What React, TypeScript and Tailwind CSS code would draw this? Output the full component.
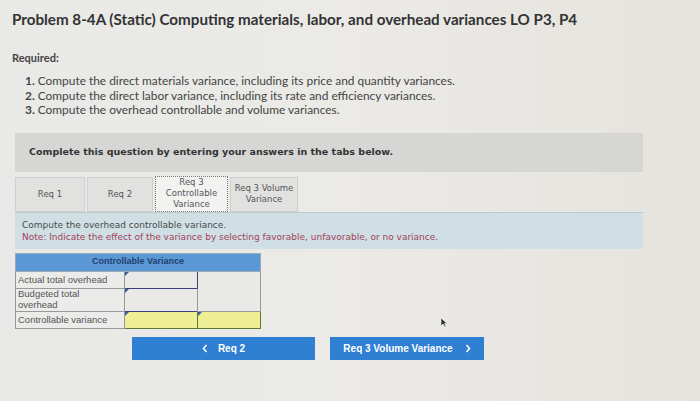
import React from 'react';

const TABS = [
  { label: 'Req 1', width: 'w-[70px]' },
  { label: 'Req 2', width: 'w-[66px]' },
  { label: 'Req 3\nControllable\nVariance', width: 'w-[73px]', active: true },
  { label: 'Req 3 Volume\nVariance', width: 'w-[68px]' },
];

function Marker() {
  return (
    <span className="absolute left-0 top-0 h-0 w-0 border-l-[4px] border-b-[4px] border-l-[#3b5b9a] border-b-transparent" />
  );
}

function Chevron({ dir }: { dir: 'left' | 'right' }) {
  return (
    <svg width="6" height="9" viewBox="0 0 6 9">
      <path
        d={dir === 'left' ? 'M4.5 1 L1.5 4.5 L4.5 8' : 'M1.5 1 L4.5 4.5 L1.5 8'}
        fill="none"
        stroke="white"
        strokeWidth="1.6"
      />
    </svg>
  );
}

export default function App() {
  return (
    <div className="relative h-[401px] w-[700px] overflow-hidden bg-gradient-to-r from-[#e9e9e7] via-[#ebeae7] to-[#e6e3dd] text-[#2b2b2b]">
      <div className="px-[12px] pt-[10px] font-['Lato',sans-serif]">
        <h1 className="text-[15.2px] font-bold leading-[19px] text-[#333]">
          Problem 8-4A (Static) Computing materials, labor, and overhead variances LO P3, P4
        </h1>
        <div className="mt-[22px] text-[11px] font-bold leading-[14px] text-[#444]">Required:</div>
        <ol className="mt-[9px] pl-[13px] text-[11.9px] leading-[14.5px] text-[#444]">
          <li>
            <b>1.</b> Compute the direct materials variance, including its price and quantity variances.
          </li>
          <li>
            <b>2.</b> Compute the direct labor variance, including its rate and efficiency variances.
          </li>
          <li>
            <b>3.</b> Compute the overhead controllable and volume variances.
          </li>
        </ol>
      </div>

      <div className="px-[15px] font-['DejaVu_Sans',sans-serif]">
        <div className="mt-[15px] flex h-[39px] w-[628px] items-center bg-[#d6d6d5] pl-[14px] text-[9.5px] font-bold text-[#333]">
          Complete this question by entering your answers in the tabs below.
        </div>

        <div className="mt-[5px] flex h-[35px] items-end gap-[2px]">
          {TABS.map((t) => (
            <div
              key={t.label}
              className={
                t.active
                  ? `${t.width} flex h-[36px] items-center justify-center whitespace-pre-line border border-dotted border-[#777] bg-[#f2f2f1] text-center text-[8.5px] leading-[11px] text-[#555]`
                  : `${t.width} flex h-[35px] items-center justify-center whitespace-pre-line border border-[#cfcfcf] bg-[#e1e1e0] text-center text-[8.5px] leading-[11px] text-[#555]`
              }
            >
              {t.label}
            </div>
          ))}
        </div>

        <div className="flex h-[37px] w-[628px] flex-col justify-center border-t border-[#b9c9d0] bg-[#cfdfe4] pl-[7px] text-[9px] leading-[12px]">
          <div className="text-[#4a4a4a]">Compute the overhead controllable variance.</div>
          <div className="text-[#a3425a]">
            Note: Indicate the effect of the variance by selecting favorable, unfavorable, or no variance.
          </div>
        </div>

        <table className="mt-[4px] w-[245px] table-fixed border-collapse font-['Liberation_Sans',sans-serif] text-[9.5px] text-[#555]">
          <colgroup>
            <col className="w-[109px]" />
            <col className="w-[73px]" />
            <col className="w-[63px]" />
          </colgroup>
          <thead>
            <tr className="h-[18px] bg-[#5b98d6]">
              <th colSpan={3} className="border border-[#9ab] text-center text-[9px] font-bold text-[#1f3f6e]">
                Controllable Variance
              </th>
            </tr>
          </thead>
          <tbody>
            <tr className="h-[17px]">
              <td className="border border-[#999] bg-[#ebebea] pl-[2px] leading-[11px]">Actual total overhead</td>
              <td className="relative border-[1.5px] border-[#3d3f7a] bg-[#e9e9e8]">
                <Marker />
              </td>
              <td rowSpan={2} className="border border-[#999] bg-[#e9e9e8]" />
            </tr>
            <tr className="h-[23px]">
              <td className="border border-[#999] bg-[#ebebea] pl-[2px] leading-[10.5px]">
                Budgeted total
                <br />
                overhead
              </td>
              <td className="relative border-[1.5px] border-[#3d3f7a] bg-[#e9e9e8]">
                <Marker />
              </td>
            </tr>
            <tr className="h-[17px]">
              <td className="border border-[#999] bg-[#ebebea] pl-[2px] leading-[11px]">Controllable variance</td>
              <td className="relative border-[1.5px] border-[#5d7a3a] bg-[#eeee94]">
                <Marker />
              </td>
              <td className="relative border-[1.5px] border-[#5d7a3a] bg-[#eeee94]">
                <Marker />
              </td>
            </tr>
          </tbody>
        </table>

        <div className="mt-[8px] flex gap-[15px] pl-[117px] font-['Liberation_Sans',sans-serif] text-[10px] font-bold text-white">
          <button className="flex h-[23px] w-[183px] items-center justify-center gap-[10px] bg-[#2f7fd3]">
            <Chevron dir="left" />
            <span>Req 2</span>
          </button>
          <button className="flex h-[23px] w-[154px] items-center justify-center gap-[12px] bg-[#2f7fd3]">
            <span>Req 3 Volume Variance</span>
            <Chevron dir="right" />
          </button>
        </div>
      </div>

      <svg className="absolute left-[440px] top-[317px]" width="8" height="11" viewBox="0 0 8 11">
        <path d="M1 1 L1 9 L3 7 L5 10 L6 9.5 L4.5 6.5 L7 6.5 Z" fill="#333" stroke="#eee" strokeWidth="0.6" />
      </svg>
    </div>
  );
}
